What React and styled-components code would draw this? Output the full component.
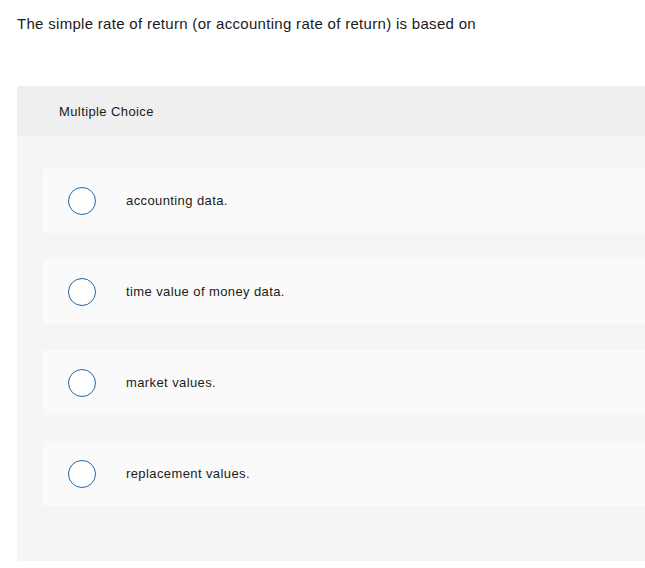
import React from 'react';
import styled, { createGlobalStyle } from 'styled-components';

const GlobalStyle = createGlobalStyle`
  html, body {
    margin: 0;
    padding: 0;
    background: #ffffff;
    overflow: hidden;
  }
  body {
    font-family: "Liberation Sans", Arial, sans-serif;
    color: #1a1a1a;
  }
`

const options = [
  'accounting data.',
  'time value of money data.',
  'market values.',
  'replacement values.',
];

function App() {
  return (
    <Page>
      <GlobalStyle />
      <Question>The simple rate of return (or accounting rate of return) is based on</Question>

      <Panel>
        <Header>Multiple Choice</Header>
        <Choices>
          {options.map((text) => (
            <Choice key={text}>
              <Radio />
              <Label>{text}</Label>
            </Choice>
          ))}
        </Choices>
      </Panel>
    </Page>
  )
}

export default App

const Page = styled.div`
  padding: 14px 0 0 17px;
  width: 660px;
`

const Question = styled.div`
  font-size: 15px;
  line-height: 20px;
  letter-spacing: 0.3px;
  color: #1a1a1a;
`

const Panel = styled.div`
  margin-top: 52px;
  background: #f5f5f5;
  border-radius: 3px 0 0 3px;
  overflow: hidden;
`

const Header = styled.div`
  background: #efefef;
  height: 50px;
  display: flex;
  align-items: center;
  padding-left: 42px;
  font-size: 13px;
  letter-spacing: 0.4px;
  color: #1a1a1a;
`

const Choices = styled.div`
  display: flex;
  flex-direction: column;
  gap: 26px;
  padding: 32px 0 55px 26px;
`

const Choice = styled.div`
  background: #fafafa;
  height: 65px;
  display: flex;
  align-items: center;
  padding-left: 25px;
  border-radius: 3px 0 0 3px;
`

const Radio = styled.span`
  width: 26px;
  height: 26px;
  border: 1.5px solid #2067a8;
  border-radius: 50%;
  background: #ffffff;
  flex-shrink: 0;
`

const Label = styled.span`
  margin-left: 30px;
  font-size: 13px;
  letter-spacing: 0.4px;
  color: #1a1a1a;
`
